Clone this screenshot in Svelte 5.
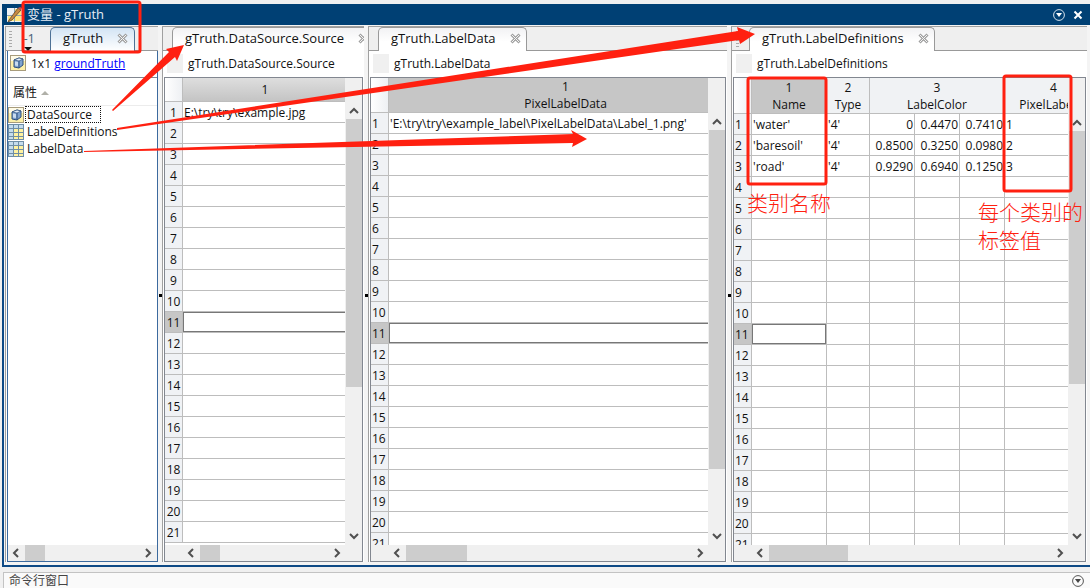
<script>
	const rows = Array.from({ length: 21 }, (_, i) => i + 1);

	const sheets = [
		{
			id: 'source',
			title: 'gTruth.DataSource.Source',
			kind: 'plain',
			headers: [{ label: '1', active: true }],
			cols: [18, 165],
			data: [['E:\\try\\try\\example.jpg']],
			vthumb: 268,
			hthumb: 20
		},
		{
			id: 'data',
			title: 'gTruth.LabelData',
			kind: 'named',
			headers: [{ label: '1', name: 'PixelLabelData', active: true }],
			cols: [18, 354],
			data: [["'E:\\try\\try\\example_label\\PixelLabelData\\Label_1.png'"]],
			vthumb: 339,
			hthumb: 61
		},
		{
			id: 'definitions',
			title: 'gTruth.LabelDefinitions',
			kind: 'named tall',
			grip: true,
			headers: [
				{ label: '1', name: 'Name', active: true },
				{ label: '2', name: 'Type' },
				{ label: '3', name: 'LabelColor', span: 3 },
				{ label: '4', name: 'PixelLabelID' }
			],
			cols: [18, 75, 43, 45, 45, 45, 98],
			data: [
				["'water'", "'4'", '0', '0.4470', '0.7410', '1'],
				["'baresoil'", "'4'", '0.8500', '0.3250', '0.0980', '2'],
				["'road'", "'4'", '0.9290', '0.6940', '0.1250', '3']
			],
			vthumb: 253,
			hthumb: 79
		}
	];

	const properties = [
		{ name: 'DataSource', icon: 'cube' },
		{ name: 'LabelDefinitions', icon: 'grid' },
		{ name: 'LabelData', icon: 'grid' }
	];

	let current = $state('DataSource');
	const selectedRow = 11;

	function total(cols) {
		return cols.reduce((a, b) => a + b, 0);
	}
</script>

{#snippet cube()}
	<svg class="icon" viewBox="0 0 16 16" width="16" height="16">
		<rect x="0.5" y="0.5" width="15" height="15" fill="#fdf0a8" stroke="#a89c7c" />
		<rect x="1" y="1" width="14" height="5" fill="#fffbe6" />
		<path d="M4 5l5-2 4 1v6l-4 3-5-1z" fill="#7fa3cf" stroke="#2c4f7d" />
		<path d="M4 5l5 1 4-2-4-1z" fill="#e4effa" stroke="#2c4f7d" stroke-width="0.7" />
		<path d="M9 6v7" stroke="#2c4f7d" />
		<path d="M5 6.500l3 .5v4l-3-.6z" fill="#c9dcf0" />
	</svg>
{/snippet}

{#snippet grid()}
	<svg class="icon" viewBox="0 0 16 16" width="16" height="16">
		<rect width="16" height="16" fill="#6f8ea6" />
		<path d="M1 1h4v3H1zM6 1h4v3H6zM11 1h4v3h-4zM1 5h4v3H1zM1 9h4v3H1zM1 13h4v2H1z" fill="#c5dced" />
		<path d="M6 5h4v3H6zM11 5h4v3h-4zM6 9h4v3H6zM11 9h4v3h-4zM6 13h4v2H6zM11 13h4v2h-4z" fill="#fff2a0" />
	</svg>
{/snippet}

{#snippet cross()}
	<svg viewBox="0 0 11 11" width="11" height="11">
		<path d="M1.500 1.500l8 8M9.500 1.500l-8 8" stroke="#a0a0a0" stroke-width="3" />
		<path d="M2 2l7 7M9 2l-7 7" stroke="#f4f4f4" />
	</svg>
{/snippet}

{#snippet arrow(dir, d)}
	<button class="arrow" aria-label={dir}>
		<svg viewBox="0 0 10 10" width="10" height="10"><path {d} fill="none" stroke="#505050" stroke-width="2" /></svg>
	</button>
{/snippet}

{#snippet hbar(thumb)}
	<div class="hbar">
		{@render arrow('Scroll left', 'M6 1L2 5l4 4')}
		<span class="thumb" style="width: {thumb}px"></span>
		{@render arrow('Scroll right', 'M2 1l4 4-4 4')}
	</div>
{/snippet}

<div class="app">
	<header class="titlebar">
		<svg viewBox="0 0 16 16" width="16" height="16">
			<rect y="1" width="15" height="14" fill="#eef2f5" />
			<path d="M1 9h6v5H1zM8 9h6v5H8zM8 2h6v6H8z" fill="#ffe680" />
			<path d="M0 8.500h15M7.500 1v14" stroke="#8ca3b5" />
			<path d="M2 13L11 1l3 2-9 10-4 2z" fill="#c78a45" stroke="#5d4527" stroke-width="0.800" />
			<path d="M11 1l3 2 1-2-2-1z" fill="#c0504d" />
		</svg>
		<h1>变量 - gTruth</h1>
		<button aria-label="Actions">
			<svg viewBox="0 0 12 12" width="12" height="12">
				<circle cx="6" cy="6" r="5.400" fill="none" stroke="#d5e1ec" />
				<path d="M3 4h6L6 8z" fill="#fff" />
			</svg>
		</button>
		<button aria-label="Close">
			<svg viewBox="0 0 10 10" width="10" height="10"><path d="M1.500 1.500l7 7M8.500 1.500l-7 7" stroke="#fff" stroke-width="2" /></svg>
		</button>
	</header>

	<main class="panes">
		<section class="pane first">
			<div class="tabs">
				<span class="grip"></span>
				<button class="more">-1<span class="down"></span></button>
				<div class="tab current">
					<button class="name">gTruth</button>
					<button class="close" aria-label="Close tab">{@render cross()}</button>
				</div>
			</div>
			<div class="content">
				<div class="path">
					{@render cube()}
					<span>1x1 <a href="#ground">groundTruth</a></span>
				</div>
				<div class="list">
					<button class="sort">属性 <span class="up"></span></button>
					<ul>
						{#each properties as p}
							<li>
								{#if p.icon === 'cube'}{@render cube()}{:else}{@render grid()}{/if}
								<button class:focused={current === p.name} onclick={() => (current = p.name)}>{p.name}</button>
							</li>
						{/each}
					</ul>
				</div>
				{@render hbar(20)}
			</div>
		</section>

		{#each sheets as s}
			<section class="pane">
				<span class="splitter"></span>
				<div class="tabs">
					{#if s.grip}<span class="grip small"></span>{/if}
					<div class="tab">
						<button class="name">{s.title}</button>
						<button class="close" aria-label="Close tab">{@render cross()}</button>
					</div>
				</div>
				<div class="path"><span class="blank"></span><span>{s.title}</span></div>
				<div class="sheet {s.kind}">
					<div class="view">
						<table style="width: {total(s.cols)}px">
							<colgroup>
								{#each s.cols as w}<col style="width: {w}px" />{/each}
							</colgroup>
							<thead>
								<tr>
									<td class="corner"></td>
									{#each s.headers as h}
										<th class:active={h.active} colspan={h.span ?? 1}>
											{h.label}{#if h.name}<br />{h.name}{/if}
										</th>
									{/each}
								</tr>
							</thead>
							<tbody>
								{#each rows as n, r}
									<tr class:selected={n === selectedRow}>
										<th>{n}</th>
										{#each s.cols.slice(1) as _, c}
											<td class:num={c > 1 && c < 5}>{s.data[r]?.[c] ?? ''}</td>
										{/each}
									</tr>
								{/each}
							</tbody>
						</table>
					</div>
					<div class="vbar">
						{@render arrow('Scroll up', 'M1 7l4-4 4 4')}
						<span class="thumb" style="height: {s.vthumb}px"></span>
						{@render arrow('Scroll down', 'M1 2l4 4 4-4')}
					</div>
					{@render hbar(s.hthumb)}
				</div>
			</section>
		{/each}
	</main>

	<footer class="command">
		<span>命令行窗口</span>
		<button aria-label="Command window actions">
			<svg viewBox="0 0 12 12" width="12" height="12">
				<circle cx="6" cy="6" r="5.400" fill="none" stroke="#555" />
				<path d="M3 4h6L6 8z" fill="#444" />
			</svg>
		</button>
	</footer>

	<!-- Annotations -->
	<svg class="marks" width="1090" height="588" viewBox="0 0 1090 588">
		<g fill="none" stroke="#ff2010" stroke-width="3">
			<rect x="23" y="2" width="117" height="50" rx="2" />
			<rect x="748" y="78" width="78" height="106" rx="2" />
			<rect x="1004" y="76" width="67" height="115" rx="2" />
		</g>
		<g fill="#ff2010">
			<path d="M112 110L169 52l-3-3 18-4-7 16-2-4-62 54z" />
			<path d="M117 128L738 31l-1-4 18 7-15 10-1-4L117 130z" />
			<path d="M84 151l489-17-2-4 16 9-15 8 1-4L84 152z" />
			<text x="747" y="211">类别名称</text>
			<text x="978" y="220">每个类别的</text>
			<text x="978" y="248">标签值</text>
		</g>
	</svg>
</div>

<style>
	:global(body) {
		margin: 0;
		background: #f0f0f0;
	}

	.app {
		position: relative;
		display: flex;
		flex-direction: column;
		height: 100vh;
		box-sizing: border-box;
		padding: 4px 0 0 2px;
		overflow: hidden;
		font: 12px/17px 'Open Sans', 'Noto Sans CJK SC', sans-serif;
		color: #111;
	}

	button {
		margin: 0;
		padding: 0;
		border: 0;
		background: none;
		font: inherit;
		color: inherit;
	}

	svg {
		display: block;
		flex: none;
	}

	ul {
		list-style: none;
		margin: 0;
		padding: 0;
	}

	/* Title bar */

	.titlebar {
		display: flex;
		align-items: center;
		flex: none;
		gap: 8px;
		height: 21px;
		padding: 0 7px 0 5px;
		background: #004074;
		color: #e6edf4;
	}

	.titlebar h1 {
		flex: 1;
		margin: 0 0 0 -4px;
		font-size: 13px;
		font-weight: normal;
	}

	/* Panes */

	.panes {
		display: grid;
		grid-template-columns: 153fr 202fr 359fr 356fr;
		grid-template-rows: minmax(0, 1fr);
		gap: 4px;
		flex: 1;
		min-height: 0;
		padding: 1px 3px 3px 1px;
		border-left: 2px solid #0e4a86;
		border-bottom: 2px solid #0e4a86;
		background: #f4f4f4;
	}

	.pane {
		position: relative;
		display: flex;
		flex-direction: column;
		min-width: 0;
		box-sizing: border-box;
		padding: 0 1px 0 1px;
		border-left: 1px solid #a0a0a0;
		background: #fff;
	}

	.splitter {
		position: absolute;
		left: -4px;
		top: 50%;
		width: 3px;
		height: 3px;
		background: #000;
	}

	.tabs {
		display: flex;
		align-items: stretch;
		flex: none;
		box-sizing: border-box;
		height: 25px;
		margin: 0 -1px;
		padding-left: 9px;
		border-top: 1px solid #a0a0a0;
		background: linear-gradient(#999, #999) bottom / 100% 1px no-repeat #efefef;
		overflow: hidden;
	}

	.tab {
		display: flex;
		align-items: center;
		flex: none;
		box-sizing: border-box;
		padding: 0 5px 2px 12px;
		gap: 14px;
		border: 1px solid #999;
		border-bottom: 0;
		border-radius: 5px 5px 0 0;
		background: linear-gradient(#f2f2f4, #fff 60%);
		font-size: 13px;
	}

	.tab.current {
		padding-right: 6px;
		border-color: #4d7196;
		background: linear-gradient(#d3e4f4, #fff);
	}

	.grip {
		flex: none;
		width: 3px;
		margin: 4px 0;
		background: repeating-linear-gradient(#aaa 0 1px, transparent 1px 3px);
	}

	.grip.small {
		margin: 4px 10px 4px -5px;
	}

	.more {
		position: relative;
		flex: none;
		width: 38px;
		padding-right: 15px;
		padding-bottom: 2px;
		color: #48627a;
		text-align: right;
		font-size: 13px;
	}

	.down {
		position: absolute;
		left: 12px;
		bottom: 0;
		border: 4px solid transparent;
		border-top-color: #111;
		border-bottom: 0;
	}

	.path {
		display: flex;
		align-items: center;
		flex: none;
		box-sizing: border-box;
		gap: 5px;
		height: 26px;
		padding: 0 0 2px 3px;
	}

	.path a {
		color: #00f;
	}

	.blank {
		width: 16px;
		height: 19px;
		background: #f0f0f0;
	}

	/* Property list */

	.first {
		padding: 0;
	}

	.first .tabs {
		margin: 0;
		padding-left: 3px;
	}

	.content {
		display: flex;
		flex-direction: column;
		flex: 1;
		min-height: 0;
		margin-left: 1px;
		border: 1px solid #3c6a9e;
		border-top: 0;
	}

	.first .path {
		padding-left: 2px;
	}

	.list {
		flex: 1;
		border-top: 1px solid #828790;
	}

	.sort {
		display: flex;
		align-items: center;
		gap: 4px;
		width: 100%;
		height: 28px;
		padding: 2px 0 0 5px;
		border-bottom: 1px solid #ececec;
	}

	.up {
		border: 4px solid transparent;
		border-bottom-color: #b0b0a8;
		border-top: 0;
	}

	.list li {
		display: flex;
		align-items: center;
		gap: 1px;
		height: 17px;
	}

	.list li button {
		padding: 0 8px 0 1px;
		border: 1px dotted transparent;
		line-height: 15px;
	}

	.list li button.focused {
		border-color: #111;
	}

	/* Sheets */

	.sheet {
		--head: 24px;
		display: grid;
		grid-template-columns: minmax(0, 1fr) 17px;
		grid-template-rows: minmax(0, 1fr) 16px;
		flex: 1;
		min-height: 0;
		border: 1px solid #828790;
		background: #f0f0f0;
	}

	.sheet.named {
		--head: 35px;
	}

	.sheet.tall {
		--head: 36px;
	}

	.view {
		overflow: hidden;
		background: #fff;
	}

	table {
		table-layout: fixed;
		border-collapse: separate;
		border-spacing: 0;
	}

	th,
	td {
		box-sizing: border-box;
		height: 21px;
		padding: 0 1px;
		border-right: 1px solid #bdbdbd;
		border-bottom: 1px solid #bdbdbd;
		font-weight: normal;
		text-align: left;
		white-space: nowrap;
	}

	thead th,
	.corner {
		height: var(--head);
		background: #f0f2f4;
		text-align: center;
	}

	thead th.active {
		background: #c6c6c6;
	}

	.plain thead th.active {
		background: linear-gradient(#dedede, #c4c4c4);
	}

	.corner {
		background: linear-gradient(90deg, #fff, #eef0f3);
	}

	tbody th {
		background: #f0f2f5;
	}

	.plain tbody th {
		text-align: center;
	}

	.num {
		text-align: right;
	}

	.selected th {
		background: #c6c6c6;
	}

	.selected td:nth-child(2) {
		box-shadow: inset 0 0 0 1px #777;
	}

	.vbar {
		display: flex;
		flex-direction: column;
		min-height: 0;
		padding: var(--head) 0 0 1px;
	}

	.hbar {
		display: flex;
		flex: none;
		height: 16px;
		background: #f0f0f0;
	}

	.sheet .hbar {
		grid-column: 1 / -1;
		padding: 0 16px 0 18px;
	}

	.arrow {
		display: grid;
		place-items: center;
		flex: none;
		width: 17px;
		height: 16px;
	}

	.vbar .arrow {
		width: 16px;
		height: 17px;
	}

	.arrow:last-child {
		margin-left: auto;
	}

	.vbar .arrow:last-child {
		margin: auto 0 0;
	}

	.thumb {
		background: #cdcdcd;
	}

	/* Command window */

	.command {
		display: flex;
		align-items: center;
		justify-content: space-between;
		flex: none;
		height: 15px;
		margin: 5px 0 0 1px;
		padding: 0 6px 0 5px;
		border: 1px solid #c3c3c3;
		border-width: 1px 0 0 1px;
		background: #fafafa;
		color: #444;
	}

	.marks {
		position: absolute;
		left: 0;
		top: 0;
		pointer-events: none;
		font: 300 21px 'Noto Sans CJK SC', sans-serif;
	}
</style>
